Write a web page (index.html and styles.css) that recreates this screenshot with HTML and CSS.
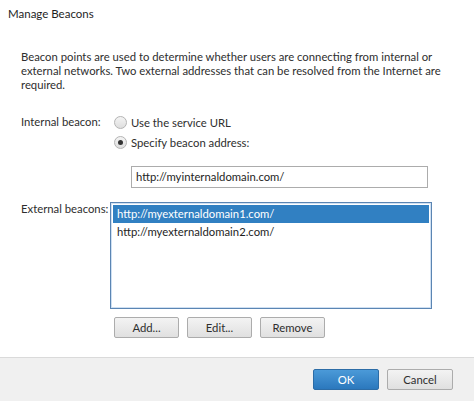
FILE: index.html
```html
<!DOCTYPE html>
<html lang="en">

<head>
    <meta charset="utf-8">
    <meta name="viewport" content="width=device-width, initial-scale=1.0">
    <title>Manage Beacons</title>
    <link rel="stylesheet" href="styles.css">
</head>

<body>
    <div class="dialog">
        <div class="titlebar">Manage Beacons</div>

        <div class="content">
            <p class="intro">Beacon points are used to determine whether users are connecting from internal or external networks. Two external addresses that can be resolved from the Internet are required.</p>

            <div class="row internal">
                <div class="label">Internal beacon:</div>
                <div class="field">
                    <label class="radio"><span class="dot"></span>Use the service URL</label>
                    <label class="radio"><span class="dot checked"></span>Specify beacon address:</label>
                    <div class="textbox">http://myinternaldomain.com/</div>
                </div>
            </div>

            <div class="row external">
                <div class="label">External beacons:</div>
                <div class="field">
                    <div class="listbox">
                        <div class="item selected">http://myexternaldomain1.com/</div>
                        <div class="item">http://myexternaldomain2.com/</div>
                    </div>
                    <div class="buttons">
                        <button class="btn">Add...</button>
                        <button class="btn">Edit...</button>
                        <button class="btn">Remove</button>
                    </div>
                </div>
            </div>
        </div>

        <div class="footer">
            <button class="btn primary">OK</button>
            <button class="btn">Cancel</button>
        </div>
    </div>
</body>

</html>
```

FILE: styles.css
```css
body {
    margin: 0;
    padding: 0;
    background-color: white;
    font-family: Lato, "Noto Sans", sans-serif;
    font-size: 11.3px;
    color: #2e2e2e;
}

.dialog {
    width: 474px;
    height: 401px;
    display: flex;
    flex-direction: column;
}

.titlebar {
    height: 28px;
    line-height: 28px;
    padding-left: 8px;
    font-size: 11.5px;
    color: #1e1e1e;
}

.content {
    height: 329px;
    padding-left: 21px;
}

.intro {
    margin: 22px 0 0 0;
    width: 430px;
    line-height: 14px;
}

.row {
    display: flex;
}

.internal {
    margin-top: 23px;
}

.external {
    margin-top: 14px;
}

.label {
    width: 89px;
    line-height: 20px;
    margin-top: -3px;
    white-space: nowrap;
}

.internal .field {
    padding-left: 4px;
}

.radio {
    display: flex;
    align-items: center;
    height: 14px;
    margin-bottom: 6px;
}

.dot {
    width: 11px;
    height: 11px;
    border: 1px solid #b4b4b4;
    border-radius: 50%;
    background: linear-gradient(#f4f4f4, #dedede);
    margin-right: 4px;
    position: relative;
}

.dot.checked::after {
    content: "";
    position: absolute;
    left: 3px;
    top: 3px;
    width: 5px;
    height: 5px;
    border-radius: 50%;
    background-color: #333;
}

.textbox {
    margin: 17px 0 0 17px;
    width: 291px;
    height: 20px;
    line-height: 20px;
    padding-left: 4px;
    border: 1px solid #acacac;
    color: #1e1e1e;
}

.listbox {
    width: 316px;
    height: 101px;
    border: 1px solid #5b85b3;
    box-shadow: inset 0 0 0 1px #cfe0f2;
    padding: 2px;
}

.item {
    height: 18px;
    line-height: 18px;
    padding-left: 4px;
    color: #1e1e1e;
}

.selected {
    background-color: #3180c2;
    color: white;
}

.buttons {
    display: flex;
    gap: 8px;
    margin: 8px 0 0 4px;
}

.btn {
    width: 65px;
    height: 21px;
    padding: 0;
    font-family: Lato, "Noto Sans", sans-serif;
    font-size: 11.3px;
    color: #2e2e2e;
    border: 1px solid #acacac;
    border-radius: 2px;
    background: linear-gradient(#f3f3f3, #e0e0e0);
}

.footer {
    flex: 1;
    background-color: #f0f0f0;
    border-top: 1px solid #dadada;
    display: flex;
    justify-content: flex-end;
    gap: 8px;
    padding: 11px 21px 0 0;
}

.footer .btn {
    width: 66px;
    height: 21px;
}

.primary {
    color: white;
    border-color: #2c6ca6;
    background: linear-gradient(#4b9ad8, #2b78bd);
}
```
